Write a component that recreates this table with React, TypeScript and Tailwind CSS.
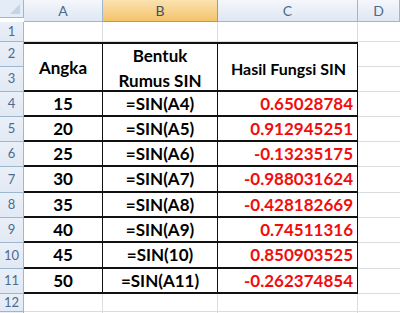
import React from 'react';

const rowHeights = [20, 25, 25, 25, 25, 25, 26, 25, 25, 26, 25, 18, 5];

const data = [
  { a: '15', b: '=SIN(A4)', c: '0.65028784' },
  { a: '20', b: '=SIN(A5)', c: '0.912945251' },
  { a: '25', b: '=SIN(A6)', c: '-0.13235175' },
  { a: '30', b: '=SIN(A7)', c: '-0.988031624' },
  { a: '35', b: '=SIN(A8)', c: '-0.428182669' },
  { a: '40', b: '=SIN(A9)', c: '0.74511316' },
  { a: '45', b: '=SIN(10)', c: '0.850903525' },
  { a: '50', b: '=SIN(A11)', c: '-0.262374854' },
];

function RowHead({ n, h }: { n: number; h: number }) {
  return (
    <div
      className="flex items-center justify-center border-r border-b border-[#9eb6ce] bg-gradient-to-b from-[#eaf0f8] to-[#e1e9f4] text-[13px] text-[#4f6a8c]"
      style={{ height: h }}
    >
      {n <= 12 ? n : ''}
    </div>
  );
}

function ColHead({ label, active }: { label: string; active?: boolean }) {
  return (
    <div
      className={
        active
          ? 'flex items-center justify-center border-r border-b border-[#c29a4c] bg-gradient-to-b from-[#fbe2b0] to-[#f3c46a] text-[14px] text-[#3c4f6b]'
          : 'flex items-center justify-center border-r border-b border-[#9eb6ce] bg-gradient-to-b from-[#f4f7fb] to-[#dfe7f2] text-[14px] text-[#4f6a8c]'
      }
    >
      {label}
    </div>
  );
}

function EmptyRow({ h }: { h: number }) {
  return (
    <div className="flex" style={{ height: h }}>
      <div className="w-[79px] border-r border-b border-[#dadcdd]" />
      <div className="w-[115px] border-r border-b border-[#dadcdd]" />
      <div className="w-[140px] border-r border-b border-[#dadcdd]" />
      <div className="w-[42px] border-b border-[#dadcdd]" />
    </div>
  );
}

export default function App() {
  return (
    <div className="w-[400px] h-[313px] overflow-hidden bg-white" style={{ fontFamily: 'Lato, "Open Sans", sans-serif' }}>
      <div className="grid grid-cols-[24px_79px_115px_140px_42px]">
        {/* column headers */}
        <div className="relative h-[18px] border-r border-b border-[#9eb6ce] bg-[#e4ecf7]">
          <div className="absolute right-[3px] bottom-[3px] w-0 h-0 border-l-[10px] border-l-transparent border-b-[10px] border-b-[#c3d3e8]" />
        </div>
        <ColHead label="A" />
        <ColHead label="B" active />
        <ColHead label="C" />
        <ColHead label="D" />
      </div>

      <div className="flex">
        <div className="w-[24px] flex flex-col">
          {rowHeights.map((h, i) => (
            <RowHead key={i} n={i + 1} h={h} />
          ))}
        </div>

        <div className="flex flex-col">
          <EmptyRow h={20} />

          {/* rows 2-3 header block */}
          <div className="flex h-[50px] font-bold text-[17px] text-black">
            <div className="w-[79px] flex items-center justify-center border-r border-b-2 border-[#111] border-t-2">
              <span className="pt-[1px]">Angka</span>
            </div>
            <div className="w-[115px] flex flex-col border-r border-b-2 border-t-2 border-[#111]">
              <div className="h-[24px] flex items-end justify-center">Bentuk</div>
              <div className="flex-1 flex items-end justify-center pb-[1px]">Rumus SIN</div>
            </div>
            <div className="w-[140px] flex items-center justify-center border-r border-b-2 border-t-2 border-[#111] text-[16px]">
              <span className="pt-[3px] pl-[2px]">Hasil Fungsi SIN</span>
            </div>
            <div className="w-[42px] flex flex-col">
              <div className="h-[25px] border-b border-[#dadcdd]" />
              <div className="flex-1 border-b border-[#dadcdd]" />
            </div>
          </div>

          {/* data rows */}
          {data.map((r, i) => (
            <div key={i} className="flex font-bold text-[17px]" style={{ height: rowHeights[i + 3] }}>
              <div className="w-[79px] flex items-center justify-center border-r border-b-2 border-[#111] text-black">
                {r.a}
              </div>
              <div className="w-[115px] flex items-center justify-center border-r border-b-2 border-[#111] text-black">
                {r.b}
              </div>
              <div className="w-[140px] flex items-center justify-end pr-[4px] border-r border-b-2 border-[#111] text-[#f20d0d]">
                {r.c}
              </div>
              <div className="w-[42px] border-b border-[#dadcdd]" />
            </div>
          ))}

          <EmptyRow h={18} />
          <EmptyRow h={5} />
        </div>
      </div>
    </div>
  );
}
